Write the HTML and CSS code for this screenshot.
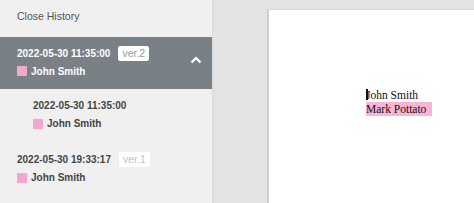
FILE: index.html
```html
<!DOCTYPE html>
<html lang="en">
<head>
    <meta charset="UTF-8">
    <title>Version History</title>
    <link rel="stylesheet" href="styles.css">
</head>
<body>
    <div class="app">
        <div class="history-panel">
            <div class="history-header">Close History</div>
            <div class="version active">
                <div class="version-main">
                    <div class="version-row">
                        <span class="version-date">2022-05-30 11:35:00</span>
                        <span class="version-tag">ver.2</span>
                    </div>
                    <div class="author">
                        <span class="author-color"></span>
                        <span class="author-name">John Smith</span>
                    </div>
                </div>
                <svg class="chevron" width="12" height="8" viewBox="0 0 12 8">
                    <path d="M1.5 6.5 L6 2 L10.5 6.5" fill="none" stroke="#fff" stroke-width="2.2"/>
                </svg>
            </div>
            <div class="version sub">
                <div class="version-main">
                    <div class="version-row">
                        <span class="version-date">2022-05-30 11:35:00</span>
                    </div>
                    <div class="author">
                        <span class="author-color"></span>
                        <span class="author-name">John Smith</span>
                    </div>
                </div>
            </div>
            <div class="version">
                <div class="version-main">
                    <div class="version-row">
                        <span class="version-date">2022-05-30 19:33:17</span>
                        <span class="version-tag faded">ver.1</span>
                    </div>
                    <div class="author">
                        <span class="author-color"></span>
                        <span class="author-name">John Smith</span>
                    </div>
                </div>
            </div>
        </div>
        <div class="editor-area">
            <div class="page">
                <div class="doc-text">
                    <p><span class="cursor"></span>John Smith</p>
                    <p><span class="inserted">Mark Pottato</span></p>
                </div>
            </div>
        </div>
    </div>
</body>
</html>
```

FILE: styles.css
```css
* {
    margin: 0;
    padding: 0;
    box-sizing: border-box;
}

body {
    width: 474px;
    height: 203px;
    overflow: hidden;
    font-family: 'Liberation Sans', Arial, sans-serif;
    background: #e3e3e3;
}

.app {
    display: flex;
    height: 203px;
}

.history-panel {
    width: 213px;
    flex-shrink: 0;
    background: #f0f0f0;
    border-right: 1px solid #d9d9d9;
}

.history-header {
    height: 37px;
    padding: 10px 0 0 17px;
    font-size: 10.5px;
    color: #555;
}

.version {
    display: flex;
    align-items: center;
    padding: 11px 0 0 17px;
}

.version.active {
    height: 52px;
    padding: 0 0 2px 17px;
    background: #798187;
}

.version.sub {
    height: 52px;
    padding: 9px 0 0 33px;
    align-items: flex-start;
}

.version-main {
    flex: 1;
}

.version-row {
    display: flex;
    align-items: center;
    height: 15px;
}

.version-date {
    font-size: 10px;
    font-weight: bold;
    color: #444;
}

.active .version-date,
.active .author-name {
    color: #fff;
}

.version-tag {
    margin-left: 8px;
    padding: 0 4px;
    height: 15px;
    line-height: 15px;
    background: #fff;
    border-radius: 2px;
    font-size: 10.5px;
    color: #999;
}

.version-tag.faded {
    color: #c4c4c4;
}

.author {
    display: flex;
    align-items: center;
    margin-top: 3px;
    height: 15px;
}

.author-color {
    width: 10px;
    height: 10px;
    background: #f3a7cd;
    margin-right: 4px;
}

.author-name {
    font-size: 10px;
    font-weight: bold;
    color: #444;
}

.chevron {
    margin: 0 10px 4px 0;
}

.editor-area {
    flex: 1;
    padding: 9px 0 0 54px;
}

.page {
    height: 100%;
    background: #fff;
    border-left: 2px solid #cfcfcf;
    border-top: 1px solid #d5d5d5;
    padding: 79px 0 0 97px;
}

.doc-text {
    font-family: 'Liberation Serif', 'Times New Roman', serif;
    font-size: 11.5px;
    line-height: 13px;
    color: #111;
}

.cursor {
    display: inline-block;
    width: 2px;
    height: 11px;
    background: #111;
    vertical-align: -1px;
    margin-right: -2px;
}

.inserted {
    display: inline-block;
    background: #f9b5d8;
    padding: 1px 6px 1px 0;
    line-height: 12px;
}
```
